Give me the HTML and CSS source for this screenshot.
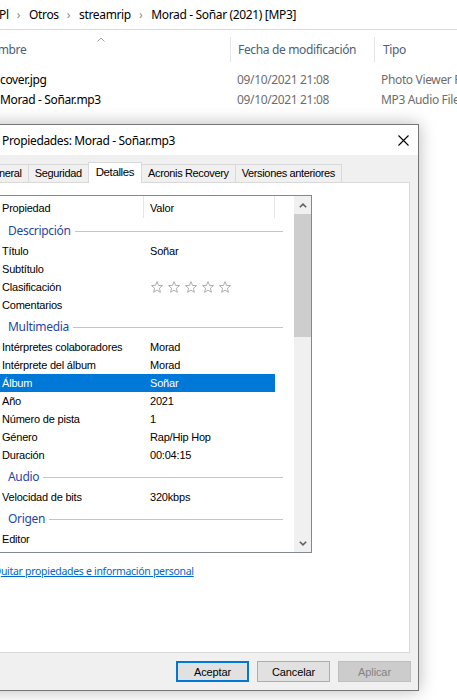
FILE: index.html
```html
<!DOCTYPE html>
<html lang="es">
<head>
<meta charset="utf-8">
<title>Propiedades: Morad - Soñar.mp3</title>
<link rel="stylesheet" href="styles.css">
</head>
<body>
<div class="explorer">
  <div class="addr">
    <span class="crumb">Pl</span><span class="chev">&#x203A;</span>
    <span class="crumb">Otros</span><span class="chev">&#x203A;</span>
    <span class="crumb">streamrip</span><span class="chev">&#x203A;</span>
    <span class="crumb">Morad - Soñar (2021) [MP3]</span>
  </div>
  <div class="cols">
    <div class="col c-name hname">Nombre
      <svg class="sort" width="8" height="5" viewBox="0 0 8 5"><polyline points="0.5,4.5 4,1 7.5,4.5" fill="none" stroke="#a0a0a0" stroke-width="1"/></svg>
    </div>
    <div class="col c-date">Fecha de modificación</div>
    <div class="col c-type">Tipo</div>
  </div>
  <div class="frow">
    <div class="c-name fname">cover.jpg</div>
    <div class="c-date fmeta">09/10/2021 21:08</div>
    <div class="c-type fmeta">Photo Viewer File</div>
  </div>
  <div class="frow">
    <div class="c-name fname">Morad - Soñar.mp3</div>
    <div class="c-date fmeta">09/10/2021 21:08</div>
    <div class="c-type fmeta">MP3 Audio File</div>
  </div>
</div>

<div class="dialog">
  <div class="titlebar">
    <span class="title">Propiedades: Morad - Soñar.mp3</span>
    <span class="close">
      <svg width="11" height="11" viewBox="0 0 11 11"><path d="M0.5 0.5 L10.5 10.5 M10.5 0.5 L0.5 10.5" stroke="#000" stroke-width="1.1" fill="none"/></svg>
    </span>
  </div>
  <div class="dbody">
    <div class="tabs">
      <div class="tab">General</div>
      <div class="tab">Seguridad</div>
      <div class="tab active">Detalles</div>
      <div class="tab">Acronis Recovery</div>
      <div class="tab">Versiones anteriores</div>
    </div>
    <div class="panel">
      <div class="listbox">
        <div class="lcontent">
          <div class="lhead">
            <div class="hc hprop">Propiedad</div>
            <div class="hc hval">Valor</div>
          </div>
          <div class="group"><span class="glabel">Descripción</span><span class="gline"></span></div>
          <div class="row"><div class="prop">Título</div><div class="val">Soñar</div></div>
          <div class="row"><div class="prop">Subtítulo</div><div class="val"></div></div>
          <div class="row"><div class="prop">Clasificación</div><div class="val stars">
            <svg width="12" height="12" viewBox="0 0 12 12"><polygon class="star" points="6,0.6 7.5,4.4 11.5,4.6 8.4,7.2 9.4,11.3 6,9.1 2.6,11.3 3.6,7.2 0.5,4.6 4.5,4.4"/></svg>
            <svg width="12" height="12" viewBox="0 0 12 12"><polygon class="star" points="6,0.6 7.5,4.4 11.5,4.6 8.4,7.2 9.4,11.3 6,9.1 2.6,11.3 3.6,7.2 0.5,4.6 4.5,4.4"/></svg>
            <svg width="12" height="12" viewBox="0 0 12 12"><polygon class="star" points="6,0.6 7.5,4.4 11.5,4.6 8.4,7.2 9.4,11.3 6,9.1 2.6,11.3 3.6,7.2 0.5,4.6 4.5,4.4"/></svg>
            <svg width="12" height="12" viewBox="0 0 12 12"><polygon class="star" points="6,0.6 7.5,4.4 11.5,4.6 8.4,7.2 9.4,11.3 6,9.1 2.6,11.3 3.6,7.2 0.5,4.6 4.5,4.4"/></svg>
            <svg width="12" height="12" viewBox="0 0 12 12"><polygon class="star" points="6,0.6 7.5,4.4 11.5,4.6 8.4,7.2 9.4,11.3 6,9.1 2.6,11.3 3.6,7.2 0.5,4.6 4.5,4.4"/></svg>
          </div></div>
          <div class="row"><div class="prop">Comentarios</div><div class="val"></div></div>
          <div class="group"><span class="glabel">Multimedia</span><span class="gline"></span></div>
          <div class="row"><div class="prop">Intérpretes colaboradores</div><div class="val">Morad</div></div>
          <div class="row"><div class="prop">Intérprete del álbum</div><div class="val">Morad</div></div>
          <div class="row selected"><div class="prop">Álbum</div><div class="val">Soñar</div></div>
          <div class="row"><div class="prop">Año</div><div class="val">2021</div></div>
          <div class="row"><div class="prop">Número de pista</div><div class="val">1</div></div>
          <div class="row"><div class="prop">Género</div><div class="val">Rap/Hip Hop</div></div>
          <div class="row"><div class="prop">Duración</div><div class="val">00:04:15</div></div>
          <div class="group"><span class="glabel">Audio</span><span class="gline"></span></div>
          <div class="row"><div class="prop">Velocidad de bits</div><div class="val">320kbps</div></div>
          <div class="group"><span class="glabel">Origen</span><span class="gline"></span></div>
          <div class="row"><div class="prop">Editor</div><div class="val"></div></div>
        </div>
        <div class="scrollbar">
          <div class="sbtn"><svg width="8" height="5" viewBox="0 0 8 5"><polyline points="0.8,4.3 4,1.2 7.2,4.3" fill="none" stroke="#606060" stroke-width="1.6"/></svg></div>
          <div class="thumb"></div>
          <div class="track"></div>
          <div class="sbtn"><svg width="8" height="5" viewBox="0 0 8 5"><polyline points="0.8,0.7 4,3.8 7.2,0.7" fill="none" stroke="#606060" stroke-width="1.6"/></svg></div>
        </div>
      </div>
      <a class="link" href="#">Quitar propiedades e información personal</a>
    </div>
    <div class="buttons">
      <button class="btn default">Aceptar</button>
      <button class="btn">Cancelar</button>
      <button class="btn disabled">Aplicar</button>
    </div>
  </div>
</div>
</body>
</html>
```
FILE: styles.css
```css
* { box-sizing: border-box; }
html, body { margin: 0; padding: 0; }
body {
  width: 457px;
  height: 700px;
  overflow: hidden;
  background: #fff;
  position: relative;
  font-family: "Noto Sans", "Open Sans", sans-serif;
  font-size: 12px;
  letter-spacing: -0.35px;
  color: #000;
}

/* Explorer behind */
.explorer { margin-left: -20px; }
.addr {
  height: 30px;
  border-bottom: 1px solid #d9d9d9;
  display: flex;
  align-items: center;
  padding-left: 19px;
  white-space: nowrap;
}
.crumb { color: #000; }
.chev { color: #8a8a8a; margin: 0 9px 0 8px; font-size: 12px; }
.cols {
  display: flex;
  margin-top: 7px;
  height: 25px;
  align-items: stretch;
  color: #4c607a;
  white-space: nowrap;
}
.col { display: flex; align-items: center; }
.c-name { width: 250px; flex: none; }
.c-date { width: 144px; flex: none; padding-left: 7px; }
.c-type { flex: none; padding-left: 7px; white-space: nowrap; }
.cols .c-date, .cols .c-type { border-left: 1px solid #e5e5e5; }
.cols .c-type { padding-left: 8px; }
.hname { position: relative; padding-left: 2px; }
.sort { position: absolute; left: 117px; top: 0; }
.frow {
  display: flex;
  height: 20px;
  align-items: center;
  white-space: nowrap;
}
.cols + .frow { margin-top: 7px; }
.fname { padding-left: 20px; color: #000; }
.fmeta { color: #6d6d6d; }

/* Dialog */
.dialog {
  position: absolute;
  left: -36px;
  top: 124px;
  width: 455px;
  height: 567px;
  border: 1px solid #777;
  background: #f0f0f0;
  box-shadow: 0 0 16px rgba(0, 0, 0, 0.28);
  display: flex;
  flex-direction: column;
}
.titlebar {
  height: 30px;
  flex: none;
  background: #fff;
  display: flex;
  align-items: center;
  padding-left: 37px;
}
.title { font-size: 12px; white-space: nowrap; }
.close {
  margin-left: auto;
  width: 30px;
  height: 30px;
  display: flex;
  align-items: center;
  justify-content: center;
}
.dbody {
  flex: 1;
  padding: 7px 8px 8px 13px;
  display: flex;
  flex-direction: column;
}
.tabs {
  display: flex;
  align-items: flex-end;
  height: 20px;
  margin-left: 0;
  position: relative;
  z-index: 2;
  font-family: "Liberation Sans", Arial, sans-serif;
  font-size: 11px;
  letter-spacing: -0.35px;
}
.tab {
  height: 18px;
  line-height: 17px;
  padding: 0 6px;
  border: 1px solid #d9d9d9;
  border-bottom: none;
  margin-left: -1px;
  background: #f0f0f0;
  white-space: nowrap;
}
.tab:first-child { margin-left: 0; }
.tab.active {
  height: 21px;
  margin-bottom: -1px;
  line-height: 19px;
  background: #fff;
  padding: 0 7px;
  font-size: 11.5px;
  letter-spacing: -0.4px;
}
.panel {
  height: 471px;
  flex: none;
  border: 1px solid #d9d9d9;
  background: #fff;
  padding: 12px 0 0 18px;
  display: flex;
  flex-direction: column;
  align-items: flex-start;
}
.listbox {
  width: 315px;
  height: 358px;
  border: 1px solid #828790;
  display: flex;
  background: #fff;
}
.lcontent {
  flex: 1;
  overflow: hidden;
  font-family: "Liberation Sans", Arial, sans-serif;
  font-size: 11px;
  letter-spacing: -0.2px;
}
.lhead { display: flex; height: 22px; }
.hc {
  padding-top: 3px;
  line-height: 18px;
  border-right: 1px solid #e5e5e5;
  white-space: nowrap;
}
.hprop { width: 146px; padding-left: 4px; }
.hval { width: 131px; padding-left: 6px; }
.group {
  height: 24px;
  padding: 4px 11px 2px 10px;
  display: flex;
  align-items: center;
}
.glabel {
  font-family: "Noto Sans", "Open Sans", sans-serif;
  font-size: 12px;
  letter-spacing: -0.3px;
  line-height: 18px;
  color: #1f47a6;
  white-space: nowrap;
}
.gline {
  flex: 1;
  height: 1px;
  background: #b4c6e7;
  margin-left: 4px;
}
.row {
  display: flex;
  width: 277px;
  height: 18px;
  line-height: 18px;
  white-space: nowrap;
}
.prop { width: 146px; padding-left: 4px; overflow: hidden; }
.val { width: 131px; padding-left: 6px; overflow: hidden; }
.row.selected { background: #0078d7; color: #fff; }
.stars { display: flex; align-items: center; gap: 5px; padding-left: 7px; }
.star { fill: #fff; stroke: #adadad; stroke-width: 1; }
.scrollbar {
  width: 17px;
  flex: none;
  background: #f0f0f0;
  display: flex;
  flex-direction: column;
}
.sbtn {
  height: 18px;
  display: flex;
  align-items: center;
  justify-content: center;
  flex: none;
}
.thumb { height: 123px; background: #cdcdcd; flex: none; }
.track { flex: 1; }
.link {
  margin-top: 9px;
  margin-left: -4px;
  line-height: 18px;
  color: #0066cc;
  text-decoration: underline;
  white-space: nowrap;
  font-size: 10.5px;
  letter-spacing: -0.3px;
}
.buttons {
  margin-top: 8px;
  display: flex;
  justify-content: flex-end;
  gap: 8px;
  margin-right: -1px;
}
.btn {
  width: 73px;
  height: 21px;
  padding: 0;
  background: #e1e1e1;
  border: 1px solid #adadad;
  font-family: "Liberation Sans", Arial, sans-serif;
  font-size: 11px;
  letter-spacing: -0.1px;
  color: #000;
}
.btn.default { border: 2px solid #0078d7; }
.btn.disabled { background: #cccccc; border-color: #bfbfbf; color: #838383; }
```
